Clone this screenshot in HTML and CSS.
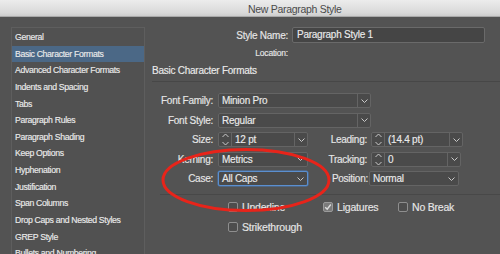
FILE: index.html
```html
<!DOCTYPE html>
<html lang="en">
<head>
<meta charset="utf-8">
<title>New Paragraph Style</title>
<link rel="stylesheet" href="styles.css">
</head>
<body>
<div class="window">
  <div class="titlebar"><span class="title">New Paragraph Style</span></div>
  <div class="main">
    <ul class="sidebar">
      <li>General</li>
      <li class="sel">Basic Character Formats</li>
      <li>Advanced Character Formats</li>
      <li>Indents and Spacing</li>
      <li>Tabs</li>
      <li>Paragraph Rules</li>
      <li>Paragraph Shading</li>
      <li>Keep Options</li>
      <li>Hyphenation</li>
      <li>Justification</li>
      <li>Span Columns</li>
      <li>Drop Caps and Nested Styles</li>
      <li>GREP Style</li>
      <li>Bullets and Numbering</li>
    </ul>
    <div class="content">
      <div class="name-row">
        <span class="wide-label">Style Name:</span>
        <div class="textbox">Paragraph Style 1</div>
      </div>
      <div class="loc-row"><span class="wide-label loc">Location:</span></div>
      <div class="heading">Basic Character Formats</div>

      <div class="form">
        <span class="lbl c1">Font Family:</span>
        <div class="field c2s"><span class="val">Minion Pro</span><span class="drop"><svg width="7" height="4" viewBox="0 0 7 4"><path d="M0.5 0.5 L3.5 3.5 L6.5 0.5" /></svg></span></div>

        <span class="lbl c1">Font Style:</span>
        <div class="field c2s"><span class="val">Regular</span><span class="drop"><svg width="7" height="4" viewBox="0 0 7 4"><path d="M0.5 0.5 L3.5 3.5 L6.5 0.5" /></svg></span></div>

        <span class="lbl c1">Size:</span>
        <div class="field c2"><span class="spin"><svg width="7" height="13" viewBox="0 0 7 13"><path d="M0.5 4 L3.5 1 L6.5 4 M0.5 9 L3.5 12 L6.5 9" /></svg></span><span class="val">12 pt</span><span class="drop"><svg width="7" height="4" viewBox="0 0 7 4"><path d="M0.5 0.5 L3.5 3.5 L6.5 0.5" /></svg></span></div>
        <span class="lbl lbl2 c3">Leading:</span>
        <div class="field c4"><span class="spin"><svg width="7" height="13" viewBox="0 0 7 13"><path d="M0.5 4 L3.5 1 L6.5 4 M0.5 9 L3.5 12 L6.5 9" /></svg></span><span class="val">(14.4 pt)</span><span class="drop"><svg width="7" height="4" viewBox="0 0 7 4"><path d="M0.5 0.5 L3.5 3.5 L6.5 0.5" /></svg></span></div>

        <span class="lbl c1">Kerning:</span>
        <div class="field c2"><span class="val">Metrics</span><span class="arrow"><svg width="7" height="4" viewBox="0 0 7 4"><path d="M0.5 0.5 L3.5 3.5 L6.5 0.5" /></svg></span></div>
        <span class="lbl lbl2 c3">Tracking:</span>
        <div class="field c4 narrow"><span class="spin"><svg width="7" height="13" viewBox="0 0 7 13"><path d="M0.5 4 L3.5 1 L6.5 4 M0.5 9 L3.5 12 L6.5 9" /></svg></span><span class="val">0</span><span class="drop"><svg width="7" height="4" viewBox="0 0 7 4"><path d="M0.5 0.5 L3.5 3.5 L6.5 0.5" /></svg></span></div>

        <span class="lbl c1">Case:</span>
        <div class="field c2 focus"><span class="val">All Caps</span><span class="arrow"><svg width="7" height="4" viewBox="0 0 7 4"><path d="M0.5 0.5 L3.5 3.5 L6.5 0.5" /></svg></span></div>
        <span class="lbl lbl2 tight c3">Position:</span>
        <div class="field c4 pos"><span class="val">Normal</span><span class="arrow"><svg width="7" height="4" viewBox="0 0 7 4"><path d="M0.5 0.5 L3.5 3.5 L6.5 0.5" /></svg></span></div>
      </div>

      <div class="sep"></div>

      <div class="checks">
        <label class="chk"><span class="box"></span>Underline</label>
        <label class="chk"><span class="box on"><svg width="8" height="8" viewBox="0 0 8 8"><path d="M1.2 4.2 L3.2 6.2 L6.8 1.5" /></svg></span>Ligatures</label>
        <label class="chk"><span class="box"></span>No Break</label>
        <label class="chk"><span class="box"></span>Strikethrough</label>
      </div>
    </div>
  </div>
  <svg class="mark" width="500" height="254" viewBox="0 0 500 254"><ellipse cx="246" cy="180" rx="83" ry="30.5" /></svg>
</div>
</body>
</html>
```

FILE: styles.css
```css
* { box-sizing: border-box; }
html, body { margin: 0; padding: 0; }
body {
  width: 500px;
  height: 254px;
  overflow: hidden;
  background: #535353;
  font-family: "Liberation Sans", Arial, sans-serif;
  color: #e6e6e6;
}
.window {
  position: relative;
  width: 500px;
  height: 254px;
  overflow: hidden;
}
.titlebar {
  height: 17px;
  background: linear-gradient(#ececec, #d9d9d9 80%, #cdcdcd);
  border-bottom: 1px solid #a9a9a9;
  padding-left: 248px;
  line-height: 16px;
}
.title {
  font-size: 10.5px;
  letter-spacing: -0.3px;
  color: #4a4a4a;
}
.main {
  display: flex;
  align-items: flex-start;
}
.sidebar {
  list-style: none;
  margin: 10px 0 0 11px;
  padding: 1px 0 0 0;
  width: 134px;
  height: 240px;
  border: 1px solid #5e5e5e;
  border-bottom: none;
  background: #515151;
  flex: none;
  -webkit-text-stroke: 0.15px #e8e8e8;
}
.sidebar li {
  height: 16.65px;
  line-height: 16.65px;
  padding-left: 3px;
  font-size: 8.7px;
  letter-spacing: -0.33px;
  color: #ececec;
  white-space: nowrap;
}
.sidebar li.sel {
  background: #4b6886;
}
.content {
  flex: 1;
  padding: 10px 0 0 7px;
  font-size: 10px;
  letter-spacing: -0.25px;
  -webkit-text-stroke: 0.15px #e6e6e6;
}
.name-row {
  display: flex;
  align-items: center;
  height: 16px;
}
.wide-label {
  display: block;
  width: 136px;
  text-align: right;
}
.textbox {
  margin-left: 4px;
  width: 193px;
  height: 16px;
  line-height: 14px;
  padding-left: 4px;
  background: #454545;
  border: 1px solid #6a6a6a;
  border-radius: 2px;
  color: #ececec;
}
.loc-row {
  margin-top: 3px;
  height: 14px;
  line-height: 14px;
}
.wide-label.loc {
  font-size: 8.5px;
  letter-spacing: -0.2px;
}
.heading {
  height: 22px;
  line-height: 21px;
  color: #ececec;
  border-bottom: 1px solid #474747;
}
.form {
  margin-top: 11px;
  display: grid;
  grid-template-columns: 66px 90px 63px 92px;
  grid-auto-rows: 15px;
  row-gap: 4.5px;
  align-items: center;
}
.c1 { grid-column: 1; }
.c2 { grid-column: 2; }
.c2s { grid-column: 2 / span 2; }
.c3 { grid-column: 3; }
.c4 { grid-column: 4; }
.lbl {
  text-align: right;
  padding-right: 5px;
  white-space: nowrap;
}
.lbl2 { padding-right: 4px; }
.lbl2.tight { padding-right: 3px; }
.field {
  display: flex;
  align-items: stretch;
  height: 15px;
  background: #4a4a4a;
  border: 1px solid #646464;
  border-radius: 2px;
  color: #ececec;
}
.field.narrow { width: 90px; }
.field.pos { width: 90px; margin-left: -2px; }
.field.focus {
  border-color: #5b8fcf;
  box-shadow: 0 0 0 0.5px #4a7bb8;
}
.val {
  flex: 1;
  padding-left: 3px;
  line-height: 13px;
  white-space: nowrap;
}
.drop {
  width: 13px;
  border-left: 1px solid #646464;
  display: flex;
  align-items: center;
  justify-content: center;
}
.arrow {
  width: 13px;
  display: flex;
  align-items: center;
  justify-content: center;
}
.spin {
  width: 13px;
  border-right: 1px solid #646464;
  display: flex;
  align-items: center;
  justify-content: center;
}
.field svg path {
  fill: none;
  stroke: #c9c9c9;
  stroke-width: 1;
}
.sep {
  margin: 8px 0 0 8px;
  height: 1px;
  background: #484848;
}
.checks {
  margin-top: 5px;
  padding-left: 76px;
  display: grid;
  grid-template-columns: 95px 75px auto;
  grid-auto-rows: 14px;
  row-gap: 6px;
  align-items: center;
}
.chk {
  display: flex;
  align-items: center;
  font-size: 10.5px;
  letter-spacing: -0.2px;
  white-space: nowrap;
}
.box {
  width: 10px;
  height: 10px;
  margin-right: 4px;
  border: 1px solid #8e8e8e;
  border-radius: 2px;
  background: #4d4d4d;
  display: flex;
  align-items: center;
  justify-content: center;
}
.box.on {
  background: #7a7a7a;
  border-color: #9a9a9a;
}
.box svg path {
  fill: none;
  stroke: #dcdcdc;
  stroke-width: 1.4;
}
.mark {
  position: absolute;
  left: 0;
  top: 0;
  pointer-events: none;
}
.mark ellipse {
  fill: none;
  stroke: #e8241a;
  stroke-width: 3;
}
```
